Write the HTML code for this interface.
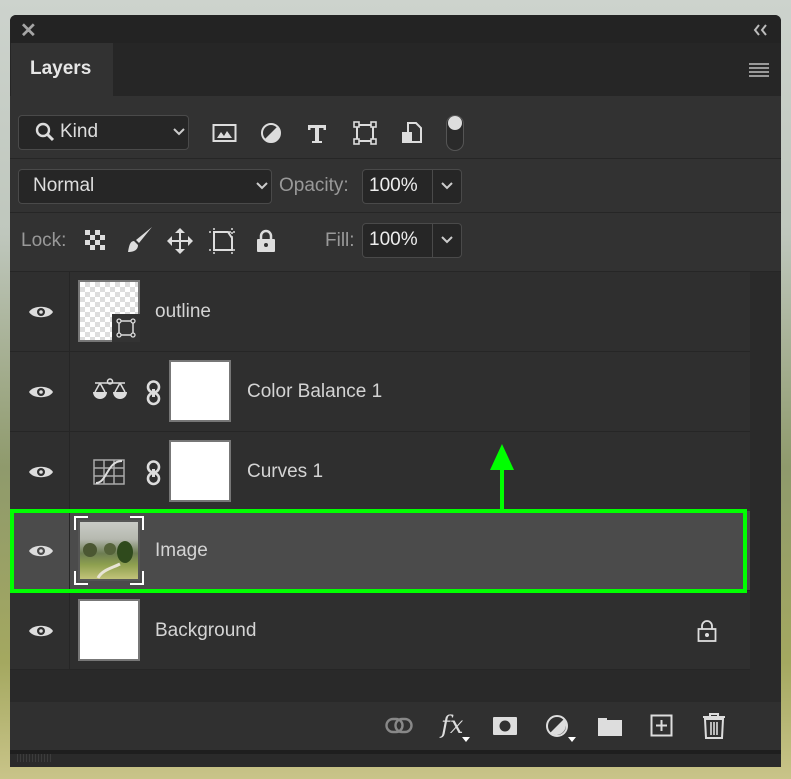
<!DOCTYPE html>
<html><head><meta charset="utf-8"><style>
*{margin:0;padding:0;box-sizing:border-box}
body{width:791px;height:779px;overflow:hidden;position:relative;font-family:"Liberation Sans",sans-serif;
background:linear-gradient(180deg,#cdd3cd 0%,#bfc7bd 30%,#8f9a6c 60%,#a4a860 85%,#c9c489 100%);}
.a{position:absolute}
.panel{left:10px;top:15px;width:771px;height:752px;background:#323232;border-radius:6px 6px 0 0;overflow:hidden}
.t{color:#cfcfcf;font-size:19px}
.box{border:1px solid #4a4a4a;background:#262626;border-radius:4px}
.row{left:0;width:740px;height:80px;background:#2f2f2f;border-bottom:1px solid #262626}
.lbl{color:#d4d4d4;font-size:19px}
svg{position:absolute}
</style></head><body>
<div class="a panel">
 <div class="a" style="left:0;top:0;width:771px;height:28px;background:#232323"></div>
 <div class="a" style="left:10px;top:3px;color:#a5a5a5;font-size:20px;font-weight:bold">✕</div>
 <svg style="left:742px;top:9px" width="16" height="12"><path d="M7 1L3 6l4 5M14 1l-4 5 4 5" stroke="#bbb" stroke-width="2" fill="none"/></svg>
 <div class="a" style="left:0;top:28px;width:771px;height:53px;background:#262626"></div>
 <div class="a" style="left:1px;top:28px;width:102px;height:54px;background:#323232"></div>
 <div class="a" style="left:20px;top:43px;color:#e6e6e6;font-size:19px;font-weight:bold">Layers</div>
 <svg style="left:739px;top:47px" width="22" height="16"><g stroke="#999" stroke-width="2"><line x1="0" y1="2" x2="20" y2="2"/><line x1="0" y1="6" x2="20" y2="6"/><line x1="0" y1="10" x2="20" y2="10"/><line x1="0" y1="14" x2="20" y2="14"/></g></svg>

 <div class="a box" style="left:8px;top:100px;width:171px;height:35px"></div>
 <svg style="left:25px;top:107px" width="22" height="22"><circle cx="8" cy="8" r="6" stroke="#ddd" stroke-width="2.4" fill="none"/><line x1="12" y1="12" x2="18" y2="18" stroke="#ddd" stroke-width="3"/></svg>
 <div class="a t" style="left:50px;top:106px;color:#ddd">Kind</div>
 <svg style="left:163px;top:112px" width="12" height="10"><path d="M1 2l5 5 5-5" stroke="#ccc" stroke-width="2" fill="none"/></svg>
 <svg style="left:202px;top:107px" width="26" height="22"><rect x="1.5" y="3" width="22" height="16" stroke="#ddd" stroke-width="2" fill="none"/><path d="M5 16l4-6 3 4 3-5 5 7z" fill="#ddd"/></svg>
 <svg style="left:250px;top:107px" width="22" height="22"><circle cx="11" cy="11" r="9" stroke="#ddd" stroke-width="2" fill="none"/><path d="M17.4 4.6A9 9 0 0 1 4.6 17.4z" fill="#ddd"/></svg>
 <svg style="left:296px;top:107px" width="22" height="22"><path d="M2 3h18v5h-2.5V6H13v13h3v2H6v-2h3V6H4.5v2H2z" fill="#ddd"/></svg>
 <svg style="left:343px;top:106px" width="24" height="24"><rect x="4" y="4" width="16" height="16" stroke="#ddd" stroke-width="2" fill="none"/><g fill="#323232" stroke="#ddd" stroke-width="1.6"><rect x="1" y="1" width="5" height="5"/><rect x="18" y="1" width="5" height="5"/><rect x="1" y="18" width="5" height="5"/><rect x="18" y="18" width="5" height="5"/></g></svg>
 <svg style="left:391px;top:106px" width="22" height="24"><path d="M7 2h8l5 5v14H7z" stroke="#ddd" stroke-width="2" fill="none"/><rect x="1" y="11" width="10" height="11" fill="#ddd"/></svg>
 <div class="a" style="left:436px;top:100px;width:18px;height:36px;border:1px solid #555;border-radius:9px;background:#2a2a2a"></div>
 <div class="a" style="left:438px;top:101px;width:14px;height:14px;border-radius:7px;background:#ddd"></div>

 <div class="a" style="left:0;top:143px;width:771px;height:1px;background:#262626"></div>
 <div class="a box" style="left:8px;top:154px;width:254px;height:35px"></div>
 <div class="a t" style="left:23px;top:160px;color:#ddd">Normal</div>
 <svg style="left:246px;top:166px" width="12" height="10"><path d="M1 2l5 5 5-5" stroke="#ccc" stroke-width="2" fill="none"/></svg>
 <div class="a t" style="left:269px;top:160px;color:#999">Opacity:</div>
 <div class="a box" style="left:352px;top:154px;width:100px;height:35px"></div>
 <div class="a" style="left:422px;top:155px;width:1px;height:33px;background:#4a4a4a"></div>
 <div class="a t" style="left:359px;top:160px;color:#eee">100%</div>
 <svg style="left:431px;top:166px" width="12" height="10"><path d="M1 2l5 5 5-5" stroke="#ccc" stroke-width="2" fill="none"/></svg>

 <div class="a" style="left:0;top:197px;width:771px;height:1px;background:#262626"></div>
 <div class="a t" style="left:11px;top:215px;color:#999">Lock:</div>
 <svg style="left:74px;top:214px" width="22" height="22"><rect x="1" y="1" width="20" height="20" fill="#ddd"/><g fill="#323232"><rect x="6" y="1" width="5" height="5"/><rect x="16" y="1" width="5" height="5"/><rect x="1" y="6" width="5" height="5"/><rect x="11" y="6" width="5" height="5"/><rect x="6" y="11" width="5" height="5"/><rect x="16" y="11" width="5" height="5"/><rect x="1" y="16" width="5" height="5"/><rect x="11" y="16" width="5" height="5"/></g></svg>
 <svg style="left:116px;top:211px" width="28" height="28"><path d="M26 1L13 17l-3-3z" fill="#ddd"/><path d="M8 15c-4 0-5 5-6 11 4 0 10-1 10-7z" fill="#ddd"/></svg>
 <svg style="left:157px;top:213px" width="26" height="26"><g stroke="#ddd" stroke-width="2"><line x1="13" y1="2" x2="13" y2="24"/><line x1="2" y1="13" x2="24" y2="13"/></g><g fill="#ddd"><path d="M13 0l-5 5h10z"/><path d="M13 26l-5-5h10z"/><path d="M0 13l5-5v10z"/><path d="M26 13l-5-5v10z"/></g></svg>
 <svg style="left:199px;top:213px" width="28" height="26"><path d="M5 4h14l4 6v12H5z" stroke="#ddd" stroke-width="2" fill="none"/><g stroke="#ddd" stroke-width="1.5" stroke-dasharray="2 2"><line x1="0" y1="4" x2="28" y2="4"/><line x1="0" y1="22" x2="28" y2="22"/><line x1="5" y1="0" x2="5" y2="26"/><line x1="23" y1="0" x2="23" y2="26"/></g></svg>
 <svg style="left:245px;top:214px" width="22" height="24"><path d="M6 10V7a5 5 0 0 1 10 0v3" stroke="#ddd" stroke-width="2.5" fill="none"/><rect x="2" y="10" width="18" height="13" rx="1" fill="#ddd"/><circle cx="11" cy="16" r="2" fill="#323232"/></svg>
 <div class="a t" style="left:315px;top:215px;color:#999">Fill:</div>
 <div class="a box" style="left:352px;top:208px;width:100px;height:35px"></div>
 <div class="a" style="left:422px;top:209px;width:1px;height:33px;background:#4a4a4a"></div>
 <div class="a t" style="left:359px;top:214px;color:#eee">100%</div>
 <svg style="left:431px;top:220px" width="12" height="10"><path d="M1 2l5 5 5-5" stroke="#ccc" stroke-width="2" fill="none"/></svg>

 <div class="a" style="left:0;top:256px;width:771px;height:1px;background:#262626"></div>
 <div class="a" style="left:740px;top:257px;width:31px;height:430px;background:#2a2a2a"></div>

 <div class="a row" style="top:257px"></div>
 <div class="a row" style="top:337px"></div>
 <div class="a row" style="top:417px"></div>
 <div class="a row" style="top:496px;background:#4b4b4b"></div>
 <div class="a row" style="top:576px;height:79px"></div>
 <div class="a" style="left:59px;top:257px;width:1px;height:398px;background:#262626"></div>
 <div class="a" style="left:0;top:655px;width:740px;height:32px;background:#292929"></div>
 <div class="a" style="left:0;top:687px;width:771px;height:48px;background:#303030"></div>
 <div class="a" style="left:0;top:735px;width:771px;height:4px;background:#1e1e1e"></div>
 <div class="a" style="left:0;top:739px;width:771px;height:13px;background:#2a2a2a"></div>

 <svg class="a" style="left:18px;top:289px" width="26" height="16"><path d="M1 8C5 1 21 1 25 8 21 15 5 15 1 8z" fill="#ddd"/><circle cx="13" cy="8" r="4" fill="#2f2f2f"/><circle cx="13" cy="8" r="1.8" fill="#ddd"/></svg>
 <svg class="a" style="left:18px;top:369px" width="26" height="16"><path d="M1 8C5 1 21 1 25 8 21 15 5 15 1 8z" fill="#ddd"/><circle cx="13" cy="8" r="4" fill="#2f2f2f"/><circle cx="13" cy="8" r="1.8" fill="#ddd"/></svg>
 <svg class="a" style="left:18px;top:449px" width="26" height="16"><path d="M1 8C5 1 21 1 25 8 21 15 5 15 1 8z" fill="#ddd"/><circle cx="13" cy="8" r="4" fill="#2f2f2f"/><circle cx="13" cy="8" r="1.8" fill="#ddd"/></svg>
 <svg class="a" style="left:18px;top:528px" width="26" height="16"><path d="M1 8C5 1 21 1 25 8 21 15 5 15 1 8z" fill="#ddd"/><circle cx="13" cy="8" r="4" fill="#4b4b4b"/><circle cx="13" cy="8" r="1.8" fill="#ddd"/></svg>
 <svg class="a" style="left:18px;top:608px" width="26" height="16"><path d="M1 8C5 1 21 1 25 8 21 15 5 15 1 8z" fill="#ddd"/><circle cx="13" cy="8" r="4" fill="#2f2f2f"/><circle cx="13" cy="8" r="1.8" fill="#ddd"/></svg>

 <div class="a" style="left:68px;top:265px;width:62px;height:62px;border:2px solid #777;background-color:#fff;background-image:linear-gradient(45deg,#ddd 25%,transparent 25%,transparent 75%,#ddd 75%),linear-gradient(45deg,#ddd 25%,transparent 25%,transparent 75%,#ddd 75%);background-size:10px 10px;background-position:0 0,5px 5px"></div>
 <div class="a" style="left:102px;top:299px;width:28px;height:28px;background:#333"></div>
 <svg class="a" style="left:106px;top:303px" width="20" height="20"><rect x="3" y="3" width="14" height="14" stroke="#ddd" stroke-width="1.5" fill="none"/><g fill="#333" stroke="#ddd" stroke-width="1.3"><circle cx="3" cy="3" r="2"/><circle cx="17" cy="3" r="2"/><circle cx="3" cy="17" r="2"/><circle cx="17" cy="17" r="2"/></g></svg>
 <div class="a lbl" style="left:145px;top:286px">outline</div>

 <svg class="a" style="left:82px;top:363px" width="36" height="26"><circle cx="18" cy="3.5" r="2.5" stroke="#ddd" stroke-width="1.5" fill="none"/><g stroke="#ddd" stroke-width="1.5"><line x1="3" y1="5" x2="33" y2="5"/><path d="M8 5L3 14M8 5l5 9M28 5l-5 9M28 5l5 9" fill="none"/></g><path d="M1 14h14a7 7 0 0 1-14 0zM21 14h14a7 7 0 0 1-14 0z" fill="#ddd"/></svg>
 <svg class="a" style="left:136px;top:365px" width="16" height="26"><g stroke="#ddd" stroke-width="2.6" fill="none"><rect x="2" y="1.5" width="11" height="11" rx="5.5"/><rect x="2" y="13" width="11" height="11" rx="5.5"/></g><rect x="6" y="9" width="3" height="8" fill="#ddd"/></svg>
 <div class="a" style="left:159px;top:345px;width:62px;height:62px;border:2px solid #777;background:#fff"></div>
 <div class="a lbl" style="left:237px;top:366px">Color Balance 1</div>

 <svg class="a" style="left:83px;top:444px" width="32" height="26"><g stroke="#aaa" stroke-width="1.5" fill="none"><rect x="1" y="1" width="30" height="24"/><line x1="11" y1="1" x2="11" y2="25"/><line x1="21" y1="1" x2="21" y2="25"/><line x1="1" y1="9" x2="31" y2="9"/><line x1="1" y1="17" x2="31" y2="17"/></g><path d="M3 24C14 24 14 2 29 2" stroke="#ddd" stroke-width="2" fill="none"/></svg>
 <svg class="a" style="left:136px;top:445px" width="16" height="26"><g stroke="#ddd" stroke-width="2.6" fill="none"><rect x="2" y="1.5" width="11" height="11" rx="5.5"/><rect x="2" y="13" width="11" height="11" rx="5.5"/></g><rect x="6" y="9" width="3" height="8" fill="#ddd"/></svg>
 <div class="a" style="left:159px;top:425px;width:62px;height:62px;border:2px solid #777;background:#fff"></div>
 <div class="a lbl" style="left:237px;top:446px">Curves 1</div>

 <div class="a" style="left:0;top:494px;width:737px;height:84px;border:4px solid #00ff00"></div>
 <div class="a" style="left:64px;top:501px;width:70px;height:69px;border:2px solid #fff"></div>
 <div class="a" style="left:78px;top:499px;width:42px;height:73px;background:#4b4b4b"></div>
 <div class="a" style="left:62px;top:515px;width:74px;height:41px;background:#4b4b4b"></div>
 <div class="a" style="left:68px;top:505px;width:62px;height:61px;border:2px solid #555;background:linear-gradient(180deg,#c9cbc6 0%,#b6b9b0 30%,#6d7d52 55%,#8ea04f 75%,#c2c37a 100%)"></div>
 <svg class="a" style="left:70px;top:507px" width="58" height="57"><circle cx="10" cy="28" r="7" fill="#4b5732"/><circle cx="30" cy="27" r="6" fill="#55633a"/><ellipse cx="45" cy="30" rx="8" ry="11" fill="#2f4a1c"/><path d="M18 56c4-8 14-10 22-14" stroke="#e8e4d6" stroke-width="3" fill="none"/></svg>
 <div class="a lbl" style="left:145px;top:525px">Image</div>

 <div class="a" style="left:490px;top:455px;width:4px;height:40px;background:#00ff00"></div>
 <svg class="a" style="left:480px;top:429px" width="24" height="26"><path d="M12 0L24 26H0z" fill="#00ff00"/></svg>

 <div class="a" style="left:68px;top:584px;width:62px;height:62px;border:2px solid #777;background:#fff"></div>
 <div class="a lbl" style="left:145px;top:605px">Background</div>
 <svg class="a" style="left:687px;top:604px" width="20" height="24"><path d="M5 10V7a5 5 0 0 1 10 0v3" stroke="#ddd" stroke-width="1.8" fill="none"/><rect x="1.5" y="10" width="17" height="12" stroke="#ddd" stroke-width="1.8" fill="none"/><circle cx="10" cy="16" r="2" fill="#ddd"/></svg>

 <svg class="a" style="left:375px;top:702px" width="28" height="18"><g stroke="#888" stroke-width="2.4" fill="none"><rect x="1.5" y="2" width="16" height="13" rx="6.5"/><rect x="10.5" y="2" width="16" height="13" rx="6.5"/></g></svg>
 <div class="a" style="left:431px;top:696px;color:#ddd;font-size:24px;font-style:italic;font-family:'DejaVu Serif',serif">fx</div>
 <svg class="a" style="left:452px;top:722px" width="8" height="5"><path d="M0 0h8L4 5z" fill="#fff"/></svg>
 <svg class="a" style="left:482px;top:700px" width="26" height="22"><rect x="1" y="2" width="24" height="18" rx="1" fill="#ddd"/><circle cx="13" cy="11" r="5.5" fill="#303030"/></svg>
 <svg class="a" style="left:535px;top:699px" width="24" height="24"><circle cx="12" cy="12" r="10" stroke="#ddd" stroke-width="2" fill="none"/><path d="M19 5A10 10 0 0 1 5 19z" fill="#ddd"/></svg>
 <svg class="a" style="left:558px;top:722px" width="8" height="5"><path d="M0 0h8L4 5z" fill="#fff"/></svg>
 <svg class="a" style="left:587px;top:700px" width="26" height="22"><path d="M1 3h9v2h15v16H1z" fill="#ddd"/></svg>
 <svg class="a" style="left:640px;top:699px" width="24" height="24"><rect x="1.5" y="1.5" width="20" height="20" stroke="#ddd" stroke-width="2" fill="none"/><path d="M11.5 6v11M6 11.5h11" stroke="#ddd" stroke-width="2"/></svg>
 <svg class="a" style="left:692px;top:697px" width="24" height="28"><path d="M1 5h22M8 5V2h8v3" stroke="#ddd" stroke-width="2" fill="none"/><path d="M3 7h18l-1 19H4z" stroke="#ddd" stroke-width="2" fill="none"/><path d="M9 10v13M12 10v13M15 10v13" stroke="#ddd" stroke-width="1.6"/></svg>
 <div class="a" style="left:7px;top:739px;width:36px;height:8px;background:repeating-linear-gradient(90deg,#3c3c3c 0 1px,transparent 1px 3px)"></div>
</div>
</body></html>
